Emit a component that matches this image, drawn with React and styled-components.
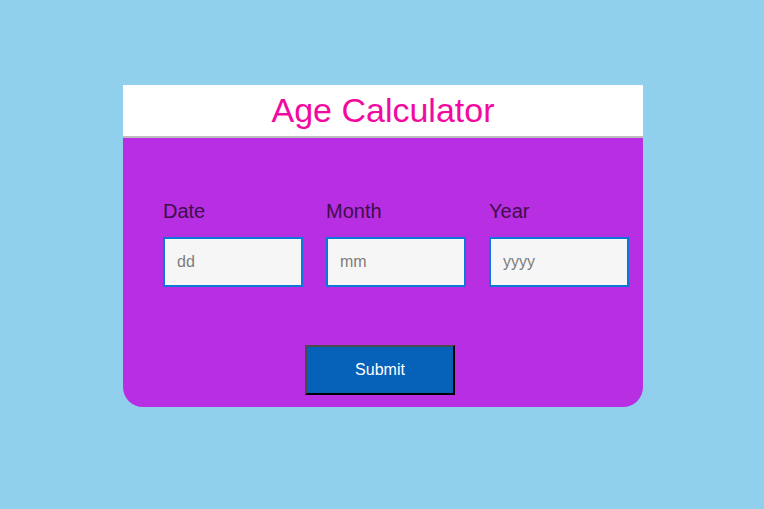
import React from "react";
import styled, { createGlobalStyle } from "styled-components";

const Global = createGlobalStyle`
  html, body { margin: 0; padding: 0; }
  body {
    background: #91d0ec;
    font-family: "Liberation Sans", Arial, sans-serif;
    width: 764px;
    height: 509px;
    overflow: hidden;
  }
`;

const Page = styled.div`
  display: flex;
  justify-content: center;
  padding: 85px 0 0 2px;
`;

const Card = styled.div`
  width: 520px;
  display: flex;
  flex-direction: column;
`;

const Header = styled.h1`
  margin: 0;
  height: 51px;
  background: #ffffff;
  border-bottom: 2px solid #bdbdbd;
  color: #f20aa0;
  font-weight: 400;
  font-size: 34px;
  text-align: center;
  line-height: 50px;
`;

const Body = styled.form`
  background: #b72ee3;
  border-radius: 0 0 20px 20px;
  height: 269px;
  display: flex;
  flex-direction: column;
  padding: 62px 0 0 40px;
  box-sizing: border-box;
`;

const Fields = styled.div`
  display: flex;
  gap: 23px;
`;

const Field = styled.label`
  display: flex;
  flex-direction: column;
  gap: 14px;
`;

const LabelText = styled.span`
  font-size: 20px;
  line-height: 23px;
  color: #3e0f48;
`;

const Input = styled.input`
  width: 140px;
  height: 50px;
  box-sizing: border-box;
  border: 2px solid #0b77d6;
  background: #f6f6f6;
  padding: 0 12px;
  font-family: "Liberation Sans", Arial, sans-serif;
  font-size: 16px;
  outline: none;
  &::placeholder { color: #7d7d7d; }
`;

const Submit = styled.button`
  align-self: flex-start;
  margin: 58px 0 0 142px;
  width: 150px;
  height: 50px;
  box-sizing: border-box;
  background: #0661b8;
  color: #ffffff;
  font-family: "Liberation Sans", Arial, sans-serif;
  font-size: 16px;
  border: 2px solid;
  border-color: #4a4a4a #000000 #000000 #4a4a4a;
  cursor: pointer;
`;

export default function App() {
  return (
    <>
      <Global />
      <Page>
        <Card>
          <Header>Age Calculator</Header>
          <Body onSubmit={(e) => e.preventDefault()}>
            <Fields>
              <Field>
                <LabelText>Date</LabelText>
                <Input placeholder="dd" />
              </Field>
              <Field>
                <LabelText>Month</LabelText>
                <Input placeholder="mm" />
              </Field>
              <Field>
                <LabelText>Year</LabelText>
                <Input placeholder="yyyy" />
              </Field>
            </Fields>
            <Submit type="submit">Submit</Submit>
          </Body>
        </Card>
      </Page>
    </>
  );
}
